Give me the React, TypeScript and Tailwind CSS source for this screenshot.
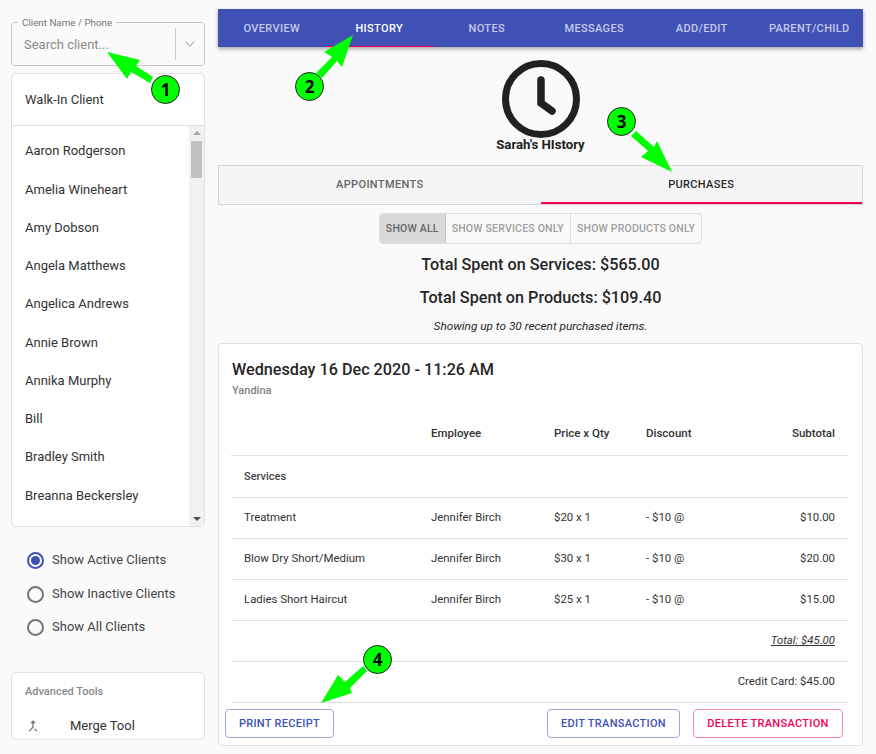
// App.tsx
// Client history page with the purchases tab open and numbered callouts on top

import React from 'react';
import { ChevronDown } from 'lucide-react';

const CLIENTS = [
  'Aaron Rodgerson',
  'Amelia Wineheart',
  'Amy Dobson',
  'Angela Matthews',
  'Angelica Andrews',
  'Annie Brown',
  'Annika Murphy',
  'Bill',
  'Bradley Smith',
  'Breanna Beckersley',
];

const TABS = ['OVERVIEW', 'HISTORY', 'NOTES', 'MESSAGES', 'ADD/EDIT', 'PARENT/CHILD'];

const FILTERS = [
  { label: 'Show Active Clients', on: true, mb: 'mb-[14px]' },
  { label: 'Show Inactive Clients', on: false, mb: 'mb-[13px]' },
  { label: 'Show All Clients', on: false, mb: '' },
];

const SERVICES = [
  { name: 'Treatment', price: '$20 x 1', subtotal: '$10.00' },
  { name: 'Blow Dry Short/Medium', price: '$30 x 1', subtotal: '$20.00' },
  { name: 'Ladies Short Haircut', price: '$25 x 1', subtotal: '$15.00' },
];

const ROW = 'grid grid-cols-[187px_123px_92px_1fr_auto] items-center pl-[13px] pr-[13px] border-b border-[#e0e0e0] text-[#333]';

const CALLOUTS = [
  { n: 1, badge: 'left-[151px] top-[75px]', points: '107,52 140,60 136,66 153,77 150,83 131,72 127,79' },
  { n: 2, badge: 'left-[295px] top-[72px]', points: '353,35 342,67 337,61 322,78 316,73 332,57 324,52' },
  { n: 3, badge: 'left-[607px] top-[107px]', points: '672,172 641,157 648,151 631,136 636,131 654,147 657,141' },
  { n: 4, badge: 'left-[363px] top-[645px]', points: '321,703 338,675 345,682 363,666 367,671 350,688 352,693' },
];

function Radio({ on }: { on: boolean }) {
  return (
    <span className={`w-[17px] h-[17px] rounded-full border-2 flex items-center justify-center ${on ? 'border-[#3f51b5]' : 'border-[#757575]'}`}>
      {on && <span className="w-[9px] h-[9px] rounded-full bg-[#3f51b5]" />}
    </span>
  );
}

function Sidebar() {
  return (
    <aside className="w-[194px] shrink-0 flex flex-col">
      {/* Search */}
      <div className="relative h-[44px] mt-[22px] border border-[#c4c4c4] rounded flex items-center">
        <span className="absolute left-[6px] -top-[7px] px-1 bg-[#fafafa] text-[9.8px] leading-[13px] text-[#757575]">Client Name / Phone</span>
        <span className="flex-1 pl-3 pt-[2px] text-[13px] text-[#8a8a8a]">Search client...</span>
        <span className="w-px h-8 bg-[#cccccc]" />
        <span className="w-[28px] flex justify-center text-[#bdbdbd]">
          <ChevronDown size={16} />
        </span>
      </div>

      {/* Client list */}
      <div className="h-[454px] mt-[7px] bg-white border border-[#e0e0e0] rounded flex flex-col overflow-hidden">
        <div className="h-[52px] shrink-0 pl-[13px] flex items-center border-b border-[#e0e0e0] text-[13px] text-[#333]">Walk-In Client</div>
        <div className="flex-1 flex min-h-0">
          <div className="flex-1 pt-[6px]">
            {CLIENTS.map(name => (
              <div key={name} className="h-[38.25px] pl-[13px] flex items-center text-[13px] text-[#333]">{name}</div>
            ))}
          </div>
          <div className="w-[15px] bg-[#f1f1f1] flex flex-col items-center justify-between py-[5px]">
            <div className="w-full flex flex-col items-center">
              <span className="w-0 h-0 border-x-[4px] border-x-transparent border-b-[4px] border-b-[#a3a3a3]" />
              <span className="w-[11px] h-[37px] mt-[6px] bg-[#c1c1c1]" />
            </div>
            <span className="w-0 h-0 border-x-[4px] border-x-transparent border-t-[4px] border-t-[#505050]" />
          </div>
        </div>
      </div>

      {/* Active filter */}
      <div className="mt-[23px] pl-[16px]">
        {FILTERS.map(f => (
          <label key={f.label} className={`h-5 flex items-center gap-2 text-[13px] text-[#444] ${f.mb}`}>
            <Radio on={f.on} />
            {f.label}
          </label>
        ))}
      </div>

      {/* Advanced tools */}
      <div className="h-[68px] mt-[35px] bg-white border border-[#e0e0e0] rounded pl-[13px] pt-[12px]">
        <div className="text-[11px] leading-[13px] font-medium text-[#8a8a8a]">Advanced Tools</div>
        <div className="mt-[18px] flex items-center text-[13px] text-[#333]">
          <svg className="w-[16px] h-[16px]" viewBox="0 0 24 24" fill="#757575">
            <path d="M17 20.41 18.41 19 15 15.59 13.59 17 17 20.41zM7.5 8H11v5.59L5.59 19 7 20.41l6-6V8h3.5L12 3.5 7.5 8z" />
          </svg>
          <span className="ml-[29px]">Merge Tool</span>
        </div>
      </div>
    </aside>
  );
}

function Transaction() {
  return (
    <div className="h-[403px] mt-[10px] bg-white border border-[#e0e0e0] rounded pt-[16px] overflow-hidden">
      <div className="pl-[13px] text-[16.2px] leading-[20px] font-medium text-[#262626]">Wednesday 16 Dec 2020 - 11:26 AM</div>
      <div className="pl-[13px] mt-[4px] text-[11px] leading-[14px] font-medium text-[#808080]">Yandina</div>

      <div className="ml-[12px] mr-[14px] mt-[12px]">
        <div className={`${ROW} h-[46px] pt-[3px] text-[11.5px] font-medium`}>
          <span />
          <span>Employee</span>
          <span>Price x Qty</span>
          <span>Discount</span>
          <span>Subtotal</span>
        </div>
        <div className={`${ROW} h-[42px] pt-[2px] text-[11px] font-medium !text-[#444]`}>Services</div>
        {SERVICES.map(s => (
          <div key={s.name} className={`${ROW} h-[41px] text-[11.4px]`}>
            <span>{s.name}</span>
            <span>Jennifer Birch</span>
            <span>{s.price}</span>
            <span>- $10 @</span>
            <span>{s.subtotal}</span>
          </div>
        ))}
        <div className="h-[41px] pr-[13px] flex items-center justify-end border-b border-[#e0e0e0] text-[11.4px] italic underline text-[#333]">Total: $45.00</div>
        <div className="h-[41px] pr-[13px] flex items-center justify-end border-b border-[#e0e0e0] text-[11.4px] text-[#333]">Credit Card: $45.00</div>
      </div>

      <div className="flex items-center gap-[13px] mt-[6px] pl-[6px] pr-[19px] text-[11px] font-medium tracking-[0.3px]">
        <button className="h-[29px] w-[109px] pt-[1px] border border-[#9fa8da] rounded text-[#3f51b5]">PRINT RECEIPT</button>
        <button className="h-[29px] w-[133px] pt-[1px] ml-auto border border-[#9fa8da] rounded text-[#3f51b5]">EDIT TRANSACTION</button>
        <button className="h-[29px] w-[150px] pt-[1px] border border-[#f48fb1] rounded text-[#f50057]">DELETE TRANSACTION</button>
      </div>
    </div>
  );
}

function Main() {
  return (
    <main className="w-[645px] shrink-0 ml-[13px] pt-[9px]">
      {/* Top tabs */}
      <div className="grid grid-cols-6 h-[38px] bg-[#3f51b5] shadow-[0_2px_4px_rgba(0,0,0,0.35)]">
        {TABS.map(t => (
          <div
            key={t}
            className={`flex items-center justify-center text-[11px] font-medium tracking-[0.35px] ${
              t === 'HISTORY' ? 'text-white border-b border-[#f50057] pt-[3px]' : 'text-[#c5cae9] pt-[2px]'
            }`}
          >
            {t}
          </div>
        ))}
      </div>

      {/* Heading */}
      <div className="flex flex-col items-center">
        <svg className="w-[78px] h-[78px] mt-[13px]" viewBox="0 0 78 78" fill="none" stroke="#212121">
          <circle cx="39" cy="39" r="35.5" strokeWidth="7" />
          <path d="M39 20v23l11 8" strokeWidth="7.5" strokeLinecap="round" />
        </svg>
        <div className="text-[13.2px] leading-[14px] font-bold text-[#212121]">Sarah's HIstory</div>
      </div>

      {/* Sub tabs */}
      <div className="grid grid-cols-2 h-[40px] mt-[13px] bg-[#f5f5f5] border border-[#d6d6d6] text-[11px] font-medium tracking-[0.35px]">
        <div className="flex items-center justify-center text-[#666]">APPOINTMENTS</div>
        <div className="flex items-center justify-center text-[#2a2a2a] border-b-2 border-[#f50057] pt-[2px]">PURCHASES</div>
      </div>

      {/* Filter buttons */}
      <div className="flex justify-center mt-[8px]">
        <div className="flex h-[31px] border border-[#dedede] rounded text-[10.5px] font-medium tracking-[0.2px] text-[#9e9e9e] overflow-hidden">
          <span className="px-[6px] flex items-center bg-[#d9d9d9] text-[#666] border-r border-[#c8c8c8]">SHOW ALL</span>
          <span className="px-[6px] flex items-center border-r border-[#dedede]">SHOW SERVICES ONLY</span>
          <span className="px-[6px] flex items-center">SHOW PRODUCTS ONLY</span>
        </div>
      </div>

      {/* Totals */}
      <div className="mt-[11px] text-center text-[#262626]">
        <div className="text-[16.2px] leading-[20px] font-medium">Total Spent on Services: $565.00</div>
        <div className="mt-[13px] text-[16.2px] leading-[20px] font-medium">Total Spent on Products: $109.40</div>
        <div className="mt-[11px] text-[11.8px] leading-[14px] italic">Showing up to 30 recent purchased items.</div>
      </div>

      <Transaction />
    </main>
  );
}

export default function App() {
  return (
    <div className="relative w-[876px] h-[754px] overflow-hidden bg-[#fafafa] flex pl-[11px] font-['Roboto',sans-serif]">
      <Sidebar />
      <Main />

      {/* Numbered callouts */}
      <svg className="absolute inset-0 w-[876px] h-[754px] pointer-events-none" viewBox="0 0 876 754">
        {CALLOUTS.map(c => (
          <polygon key={c.n} points={c.points} fill="#00ff00" />
        ))}
      </svg>
      {CALLOUTS.map(c => (
        <div
          key={c.n}
          className={`absolute ${c.badge} w-[29px] h-[29px] rounded-full bg-[#00ff00] border border-[#222] flex items-center justify-center text-[17px] font-bold text-black font-['Open_Sans',sans-serif]`}
        >
          {c.n}
        </div>
      ))}
    </div>
  );
}
